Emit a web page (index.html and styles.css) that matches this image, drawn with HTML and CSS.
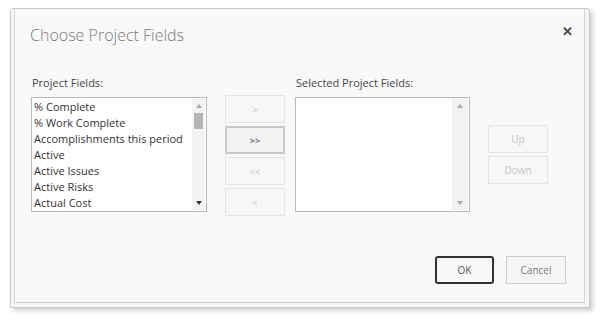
FILE: index.html
```html
<!DOCTYPE html>
<html>
<head>
<meta charset="utf-8">
<link rel="stylesheet" href="styles.css">
</head>
<body>
<div class="dialog">
  <div class="inner">
    <div class="titlebar">
      <h1 class="title">Choose Project Fields</h1>
      <span class="close">✕</span>
    </div>
    <div class="main">
      <div class="col">
        <div class="label">Project Fields:</div>
        <div class="listbox">
          <ul class="items">
            <li>% Complete</li>
            <li>% Work Complete</li>
            <li>Accomplishments this period</li>
            <li>Active</li>
            <li>Active Issues</li>
            <li>Active Risks</li>
            <li>Actual Cost</li>
          </ul>
          <div class="scroll">
            <span class="arrow up"></span>
            <span class="thumb"></span>
            <span class="arrow down dark"></span>
          </div>
        </div>
      </div>
      <div class="moves">
        <button class="btn dis">&gt;</button>
        <button class="btn en">&gt;&gt;</button>
        <button class="btn dis">&lt;&lt;</button>
        <button class="btn dis">&lt;</button>
      </div>
      <div class="col">
        <div class="label">Selected Project Fields:</div>
        <div class="listbox sel">
          <div class="items"></div>
          <div class="scroll wide">
            <span class="arrow up"></span>
            <span class="spacer"></span>
            <span class="arrow down"></span>
          </div>
        </div>
      </div>
      <div class="order">
        <button class="btn dis">Up</button>
        <button class="btn dis">Down</button>
      </div>
    </div>
    <div class="footer">
      <button class="btn ok">OK</button>
      <button class="btn cancel">Cancel</button>
    </div>
  </div>
</div>
</body>
</html>
```
FILE: styles.css
```css
* { box-sizing: border-box; }
html, body { margin: 0; padding: 0; background: #fff; }
body {
  font-family: "Open Sans", "Noto Sans", sans-serif;
  padding: 8px 10px 0 10px;
  width: 600px;
  height: 322px;
  overflow: hidden;
}
.dialog {
  width: 580px;
  height: 300px;
  border: 1px solid #c8c8c8;
  border-radius: 3px 3px 0 0;
  padding: 0 0 0 3px;
  background: #f6f6f6;
  box-shadow: 3px 3px 4px rgba(0,0,0,0.18);
}
.inner {
  height: 294px;
  border-left: 1px solid #d4d4d4;
  border-bottom: 1px solid #cfcfcf;
  border-right: 1px solid #d4d4d4;
  background: #f9f9f9;
  margin-right: 4px;
  padding: 0 0 0 15px;
  display: flex;
  flex-direction: column;
}
.titlebar {
  display: flex;
  justify-content: space-between;
  align-items: flex-start;
  height: 66px;
  padding-top: 15px;
}
.title {
  margin: 0;
  font-weight: 300;
  font-size: 16px;
  color: #7a7a7a;
  font-family: "Open Sans", sans-serif;
}
.close {
  font-size: 13px;
  color: #444;
  margin-right: 11px;
  margin-top: -2px;
  font-weight: bold;
}
.main {
  display: flex;
  align-items: flex-start;
  height: 160px;
}
.col { display: flex; flex-direction: column; }
.label {
  font-size: 11px;
  color: #444;
  height: 22px;
  padding-left: 2px;
}
.listbox {
  display: flex;
  width: 176px;
  height: 115px;
  border: 1px solid #b9b9b9;
  background: #fff;
  margin-left: 1px;
}
.listbox.sel { width: 175px; }
.items {
  flex: 1;
  list-style: none;
  margin: 0;
  padding: 1px 0 0 2px;
  font-size: 11px;
  color: #333;
  line-height: 16px;
  overflow: hidden;
}
.items li { white-space: nowrap; }
.scroll {
  width: 13px;
  margin: 1px 1px 1px 0;
  display: flex;
  flex-direction: column;
  align-items: center;
  background: #f4f4f4;
}
.scroll.wide { width: 16px; background: #f2f2f2; }
.arrow {
  width: 0; height: 0;
  border-left: 3px solid transparent;
  border-right: 3px solid transparent;
  margin: 5px 0;
}
.arrow.up { border-bottom: 4px solid #aaa; }
.arrow.down { border-top: 4px solid #aaa; margin-top: auto; }
.arrow.down.dark { border-top-color: #333; }
.thumb {
  width: 9px;
  height: 16px;
  background: #b4b4b4;
}
.moves {
  display: flex;
  flex-direction: column;
  gap: 3px;
  margin-left: 18px;
  margin-top: 20px;
  margin-right: 9px;
}
.btn {
  font-family: "Open Sans", sans-serif;
  width: 60px;
  height: 28px;
  font-size: 9px;
  background: #f7f7f7;
  border: 1px solid #e4e4e4;
  color: #bbb;
  padding: 0;
  margin: 0;
}
.btn.en {
  border: 2px solid #c9c9c9;
  color: #7a6a8a;
  font-weight: bold;
  background: #f3f3f3;
}
.order {
  display: flex;
  flex-direction: column;
  gap: 3px;
  margin-left: 18px;
  margin-top: 50px;
}
.order .btn { font-size: 10px; color: #c4c4c4; }
.footer {
  display: flex;
  justify-content: flex-end;
  gap: 12px;
  margin-top: 21px;
  padding-right: 18px;
}
.btn.ok {
  width: 59px;
  height: 28px;
  border: 2px solid #333;
  border-radius: 3px;
  color: #555;
  font-size: 10px;
  background: #f8f8f8;
}
.btn.cancel {
  width: 60px;
  height: 28px;
  border: 1px solid #ccc;
  color: #777;
  font-size: 10px;
  background: #f5f5f5;
}
```
